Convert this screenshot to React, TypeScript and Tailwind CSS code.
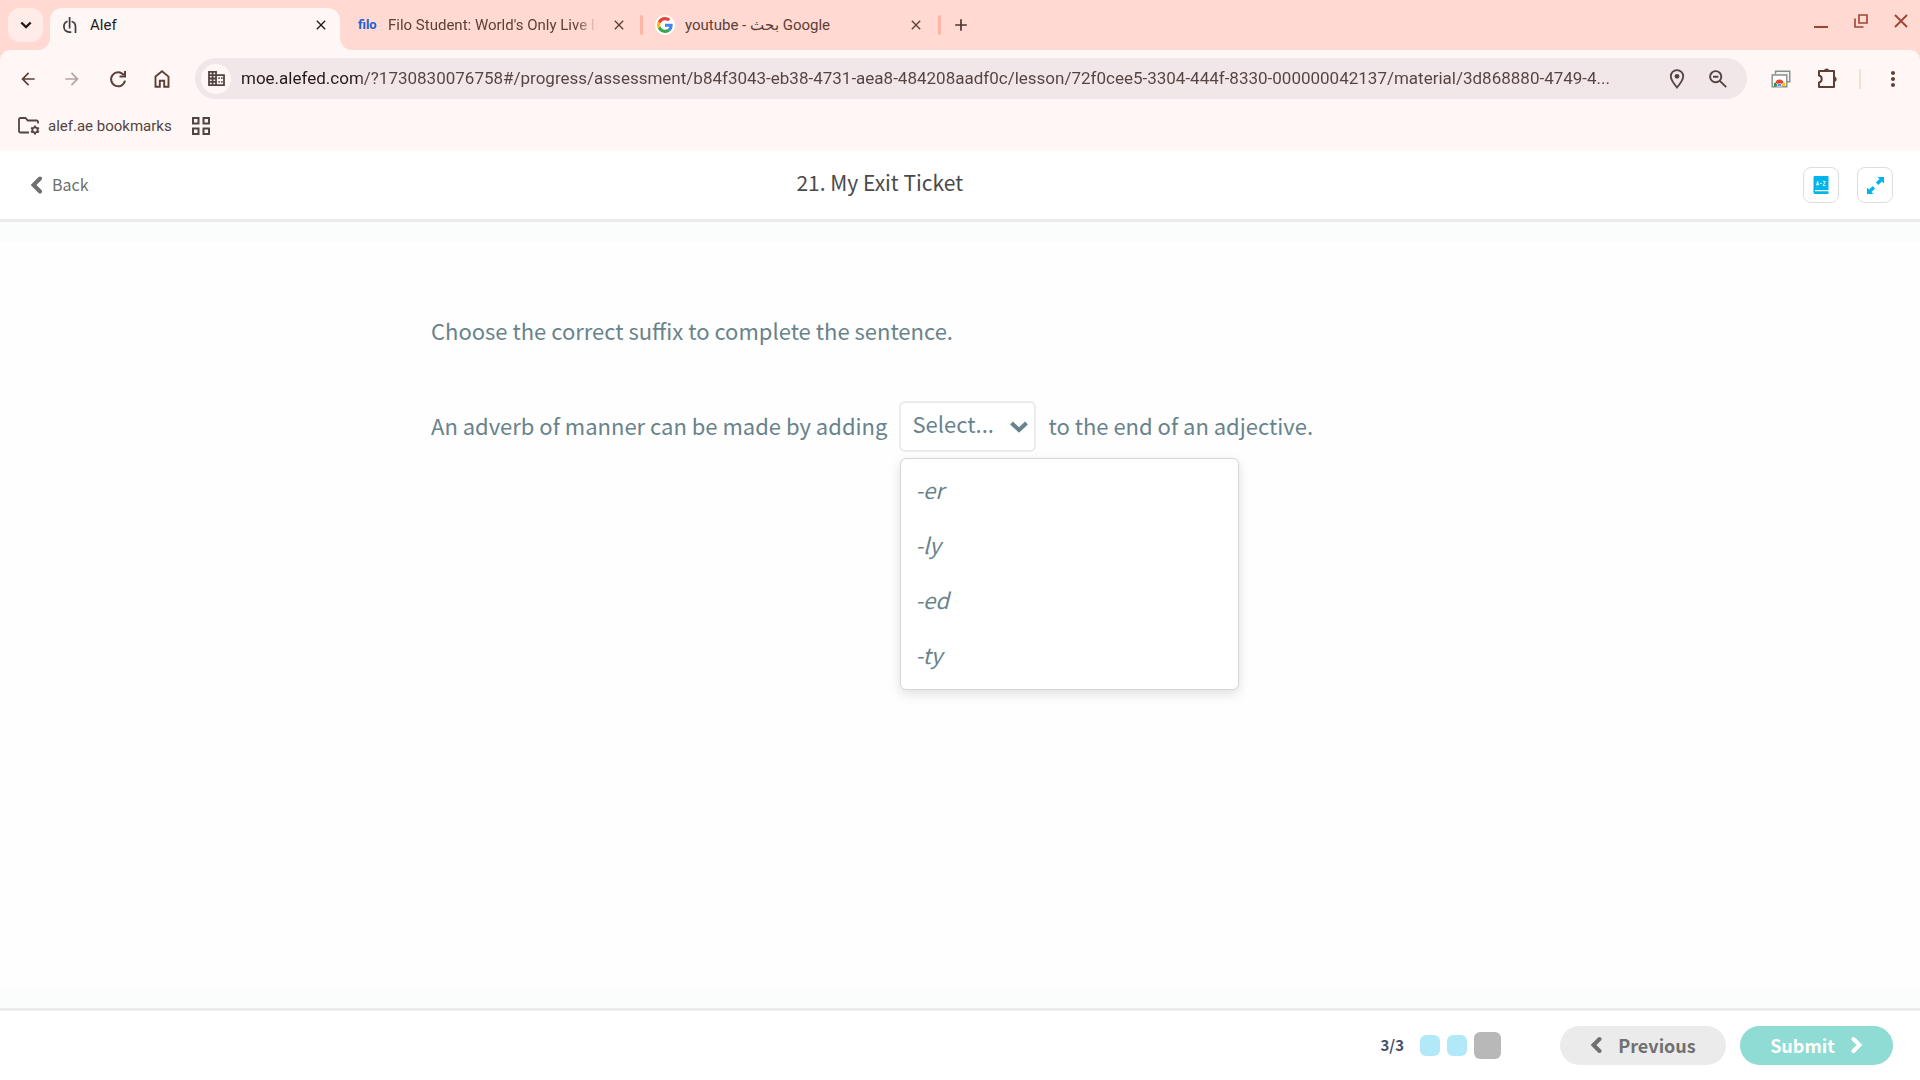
import React, { useState } from 'react';
import {
  MdArrowBack,
  MdArrowForward,
  MdClose,
  MdAdd,
  MdMoreVert,
} from 'react-icons/md';

const URL_TEXT =
  'moe.alefed.com/?1730830076758#/progress/assessment/b84f3043-eb38-4731-aea8-484208aadf0c/lesson/72f0cee5-3304-444f-8330-000000042137/material/3d868880-4749-4...';

const OPTIONS = ['-er', '-ly', '-ed', '-ty'];

const AlefIcon = () => (
  <svg className="h-[18px] w-[14px] text-[#3c3c40]" viewBox="0 0 14 18" fill="none" stroke="currentColor" strokeWidth="1.7">
    <path d="M4.6 5.200C2.200 6 .9 8 .9 10.600c0 3.200 2.200 5.500 5.600 5.500h1.800" />
    <path d="M6.600 1v11.500" />
    <path d="M8.600 5.500c2.600.7 3.900 2.400 3.900 5.100V17" />
  </svg>
);

const GoogleIcon = () => (
  <svg className="h-4 w-4" viewBox="0 0 48 48">
    <path fill="#EA4335" d="M24 9.500c3.540 0 6.710 1.220 9.210 3.600l6.850-6.850C35.900 2.380 30.470 0 24 0 14.620 0 6.510 5.380 2.560 13.220l7.980 6.190C12.430 13.720 17.740 9.500 24 9.500z" />
    <path fill="#4285F4" d="M46.980 24.550c0-1.570-.15-3.090-.38-4.550H24v9.020h12.940c-.58 2.960-2.260 5.480-4.780 7.180l7.730 6c4.510-4.180 7.090-10.360 7.090-17.650z" />
    <path fill="#FBBC05" d="M10.530 28.590c-.48-1.450-.76-2.990-.76-4.590s.27-3.140.76-4.590l-7.980-6.190C.92 16.460 0 20.120 0 24c0 3.880.92 7.540 2.560 10.780l7.970-6.190z" />
    <path fill="#34A853" d="M24 48c6.480 0 11.930-2.130 15.890-5.810l-7.730-6c-2.150 1.450-4.920 2.300-8.160 2.300-6.260 0-11.570-4.220-13.470-9.910l-7.980 6.190C6.510 42.620 14.620 48 24 48z" />
  </svg>
);

const Chevron = ({ className, d }: { className: string; d: string }) => (
  <svg className={className} viewBox="0 0 12 18" fill="none" stroke="currentColor" strokeWidth="4" strokeLinecap="round">
    <path d={d} />
  </svg>
);

const TabStrip = () => (
  <div className="flex h-[50px] justify-between">
    <div className="flex min-w-0 pl-2">
      <button aria-label="Search tabs" className="mt-2 flex h-[34px] w-[35px] items-center justify-center rounded-xl bg-[#ffece8]">
        <svg className="h-[10px] w-[12px] text-[#231918]" viewBox="0 0 12 10" fill="none" stroke="currentColor" strokeWidth="2.400">
          <path d="M1.300 2.500 6 7l4.700-4.500" />
        </svg>
      </button>

      <div className="relative ml-[7px] mt-2 flex w-[290px] items-center rounded-t-xl bg-[#fff7f5] pb-2 pl-[13px] pr-[11px] text-[#231918]">
        <svg className="absolute -left-3 bottom-0 h-3 w-3" viewBox="0 0 12 12" fill="#fff7f5">
          <path d="M12 0v12H0A12 12 0 0 0 12 0z" />
        </svg>
        <AlefIcon />
        <span className="ml-[13px] flex-1 text-[15px]">Alef</span>
        <button aria-label="Close Alef"><MdClose className="h-4 w-4" /></button>
        <svg className="absolute -right-3 bottom-0 h-3 w-3" viewBox="0 0 12 12" fill="#fff7f5">
          <path d="M0 0v12h12A12 12 0 0 1 0 0z" />
        </svg>
      </div>

      <div className="flex w-[300px] items-center pl-[18px] text-[#5d4038]">
        <span className="w-5 text-[13px] font-bold text-[#1f5fd6]">filo</span>
        <span className="ml-[10px] w-[218px] whitespace-nowrap text-[15px] [mask-image:linear-gradient(to_right,black_86%,transparent_96%)]">
          Filo Student: World's Only Live In
        </span>
        <button aria-label="Close Filo" className="ml-[5px]"><MdClose className="h-4 w-4" /></button>
      </div>
      <div className="h-5 w-[3px] self-center rounded-sm bg-[#ffb4a6]"></div>

      <div className="flex w-[295px] items-center pl-3 text-[#5d4038]">
        <span className="flex h-5 w-5 items-center justify-center rounded-full bg-white"><GoogleIcon /></span>
        <span className="ml-[10px] flex-1 text-[15px]">youtube - بحث Google</span>
        <button aria-label="Close Google" className="mr-[14px]"><MdClose className="h-4 w-4" /></button>
      </div>
      <div className="h-5 w-[3px] self-center rounded-sm bg-[#ffb4a6]"></div>
      <button aria-label="New tab" className="ml-[10px] text-[#4a3430]"><MdAdd className="h-5 w-5" /></button>
    </div>

    <div className="flex items-center gap-[26px] pb-2 pr-3 text-[#9c4536]">
      <button aria-label="Minimize">
        <svg className="h-[14px] w-[14px]" viewBox="0 0 14 14" stroke="currentColor" strokeWidth="2"><path d="M0 13h14" /></svg>
      </button>
      <button aria-label="Restore">
        <svg className="h-[14px] w-[14px]" viewBox="0 0 14 14" fill="none" stroke="currentColor" strokeWidth="1.600">
          <path d="M5 1h8v8H5zM1 4.500V13h8.500" />
        </svg>
      </button>
      <button aria-label="Close window">
        <svg className="h-[14px] w-[14px]" viewBox="0 0 14 14" stroke="currentColor" strokeWidth="1.800"><path d="m1 1 12 12M13 1 1 13" /></svg>
      </button>
    </div>
  </div>
);

const Toolbar = () => (
  <div className="flex items-center pl-[18px] pr-[15px] pt-2 text-[#5d4038]">
    <button aria-label="Back"><MdArrowBack className="h-5 w-5" /></button>
    <button aria-label="Forward" className="ml-6 text-[#b5a5a2]"><MdArrowForward className="h-5 w-5" /></button>
    <button aria-label="Reload" className="ml-[26px]">
      <svg className="h-5 w-5" viewBox="0 0 20 20" fill="none" stroke="currentColor" strokeWidth="2">
        <path d="M15.800 6.200A7 7 0 1 0 17 11.600" />
        <path d="M17 2v5.500h-5.500" />
      </svg>
    </button>
    <button aria-label="Home" className="ml-6">
      <svg className="h-5 w-5" viewBox="0 0 20 20" fill="none" stroke="currentColor" strokeWidth="1.900">
        <path d="M3.500 7.600 10 2.200l6.500 5.400v10.200h-4.300v-6H7.800v6H3.500z" />
      </svg>
    </button>

    <div className="ml-[23px] flex h-[41px] min-w-0 flex-1 items-center rounded-full bg-[#f1e6e8] pl-[6px] pr-5 text-[#534341]">
      <button aria-label="Site information" className="flex h-[30px] w-[30px] shrink-0 items-center justify-center rounded-full bg-[#fff7f5]">
        <svg className="h-[15px] w-[17px]" viewBox="0 0 18 16" fill="none" stroke="currentColor" strokeWidth="1.900">
          <path d="M1 1h7.500v14H1zM8.500 4.300H17V15H8.500M1 4.500h7.500M1 8h7.500M1 11.500h7.500M4.800 1v14" />
          <path d="M11 7.500h1.500M14 7.500h1.500M11 11.500h1.500M14 11.500h1.500" />
        </svg>
      </button>
      <input
        aria-label="Address"
        defaultValue={URL_TEXT}
        className="ml-[10px] min-w-0 flex-1 bg-[linear-gradient(90deg,#231918_120px,#534341_120px)] bg-clip-text text-[17px] text-transparent caret-black outline-none"
      />
      <button aria-label="Location" className="ml-4">
        <svg className="h-5 w-4" viewBox="0 0 16 20" fill="none" stroke="currentColor" strokeWidth="1.800">
          <path d="M8 18.500C4 13.800 1.800 10.600 1.800 7.300a6.200 6.200 0 0 1 12.400 0c0 3.300-2.200 6.500-6.200 11.200z" />
          <circle cx="8" cy="7.300" r="2.400" fill="currentColor" stroke="none" />
        </svg>
      </button>
      <button aria-label="Zoom" className="ml-6">
        <svg className="h-[18px] w-[18px]" viewBox="0 0 18 18" fill="none" stroke="currentColor" strokeWidth="1.900">
          <circle cx="6.700" cy="6.700" r="5.600" />
          <path d="m10.800 10.800 6.400 6.400M4 6.700h5.400" />
        </svg>
      </button>
    </div>

    <button aria-label="Tab groups" className="ml-6">
      <svg className="h-[18px] w-5" viewBox="0 0 20 18">
        <path d="M4.500 4V1.200h14.300v10.600H16" fill="#f7f3f2" stroke="#858e8c" strokeWidth="1.400" />
        <path d="M1.200 5h14.600v11.800H1.200z" fill="#fff" stroke="#858e8c" strokeWidth="1.400" />
        <path d="M4.300 12.500a4.400 4.400 0 0 1 8.400 0L8.500 15z" fill="#ea4335" />
        <path d="M3 13.200c1.500-1.200 3 .3 3.500 3.100H3z" fill="#1e9e4f" />
        <path d="M14 12.500c-2-.4-3.200 1-3.500 3.800H14z" fill="#fbc116" />
        <path d="M6 16.300a2.500 2.800 0 0 1 5 0z" fill="#4285f4" stroke="#fff" strokeWidth=".6" />
      </svg>
    </button>
    <button aria-label="Extensions" className="ml-[26px]">
      <svg className="h-[21px] w-[21px]" viewBox="0 0 21 21" fill="none" stroke="currentColor" strokeWidth="2" strokeLinejoin="round">
        <path d="M2 3h15v16H2v-4.500c3.600-.8 3.600-6.200 0-7z" />
        <path d="M7 3a2.600 2.600 0 0 1 5.200 0zM17 8.600a2.600 2.600 0 0 1 0 5.200z" fill="currentColor" stroke="none" />
      </svg>
    </button>
    <div className="ml-[21px] h-5 w-[2px] bg-[#ffdad3]"></div>
    <button aria-label="Menu" className="ml-5"><MdMoreVert className="h-6 w-6" /></button>
  </div>
);

const Bookmarks = () => (
  <div className="flex h-[52px] items-center pb-4 pl-[18px] pt-[18px] text-[15px] text-[#534341]">
    <a href="#bookmarks" className="flex items-center">
      <svg className="h-[18px] w-[22px]" viewBox="0 0 22 18" fill="none" stroke="currentColor" strokeWidth="1.800">
        <path d="M11 15.500H2.500A1.500 1.500 0 0 1 1 14V2.500A1.500 1.500 0 0 1 2.500 1h5l2.300 2.500h8.700A1.300 1.300 0 0 1 20 5v1.500" />
        <circle cx="17" cy="13" r="2.700" />
        <path d="M17 8.500v2M17 15.500v2M13 10.700l1.800 1M19.200 14.300l1.800 1M13 15.300l1.800-1M19.200 11.700l1.800-1" />
      </svg>
      <span className="ml-2">alef.ae bookmarks</span>
    </a>
    <button aria-label="All apps" className="ml-5">
      <svg className="h-[18px] w-[18px]" viewBox="0 0 18 18" fill="none" stroke="currentColor" strokeWidth="2">
        <path d="M1 1h5.500v5.500H1zM11.500 1H17v5.500h-5.500zM1 11.500h5.500V17H1zM11.500 11.500H17V17h-5.500z" />
      </svg>
    </button>
  </div>
);

const LessonHeader = () => (
  <header className="flex h-[71px] items-center border-b-[3px] border-[#ebebeb] bg-white pl-[30px] pr-[27px]">
    <a href="#back" className="flex items-center text-[16px] text-[#6f6f6f]">
      <Chevron className="h-[18px] w-[13px]" d="M9.500 2.500 3 9l6.500 6.500" />
      <span className="ml-[9px] pb-[2px]">Back</span>
    </a>
    <h1 className="flex-1 pb-1 pr-[132px] text-center text-[21px] text-[#4a4a4a]">21. My Exit Ticket</h1>
    <div className="flex gap-[18px] text-[#00b5e9]">
      <button aria-label="Dictionary" className="flex h-9 w-9 items-center justify-center rounded-lg border border-[#dedede]">
        <svg className="h-[18px] w-4" viewBox="0 0 16 18">
          <path d="M1.500 0h14v14H2v1.200h13.500V18H2a1.500 1.500 0 0 1-1.500-1.500v-15A1.500 1.500 0 0 1 1.500 0z" fill="currentColor" />
          <path d="M3.500 9.500 4.600 5.500l1.100 4M3.900 8.300h1.500M7 7.500h1.800M10 5.500h2.400L10 9.500h2.400" fill="none" stroke="#fff" strokeWidth=".9" />
        </svg>
      </button>
      <button aria-label="Full screen" className="flex h-9 w-9 items-center justify-center rounded-lg border border-[#dedede]">
        <svg className="h-[17px] w-[17px]" viewBox="0 0 17 17" fill="currentColor">
          <path d="M10.500 0H17v6.500l-2.100-2.100-3.600 3.600-2.400-2.400 3.600-3.600zM6.500 17H0v-6.500l2.100 2.100 3.600-3.600 2.400 2.400-3.600 3.600z" />
        </svg>
      </button>
    </div>
  </header>
);

const SuffixSelect = () => {
  const [open, setOpen] = useState(true);
  const [value, setValue] = useState('');

  return (
    <div className="relative mx-3 text-[#68838b]">
      <select
        aria-label="Suffix"
        value={value}
        onMouseDown={(e) => {
          e.preventDefault();
          setOpen(!open);
        }}
        onChange={(e) => setValue(e.target.value)}
        className="block h-[51px] w-[137px] appearance-none rounded-md border-2 border-[#ebebeb] bg-white pb-[6px] pl-[11px] outline-none"
      >
        <option value="">Select...</option>
        {OPTIONS.map((option) => (
          <option key={option} value={option}>{option}</option>
        ))}
      </select>
      <svg className="pointer-events-none absolute right-2 top-5 h-3 w-[18px]" viewBox="0 0 18 12" fill="none" stroke="currentColor" strokeWidth="4">
        <path d="m1.500 2 7.500 7 7.500-7" />
      </svg>

      {open && (
        <ul className="absolute left-px top-[57px] z-10 w-[339px] rounded-md border border-[#d6d6d6] bg-white pb-[7px] pt-[3px] shadow-[0_4px_12px_rgba(0,0,0,0.12)]">
          {OPTIONS.map((option) => (
            <li key={option}>
              <button
                className="flex h-[55px] w-full items-center px-[14px] text-left italic"
                onClick={() => {
                  setValue(option);
                  setOpen(false);
                }}
              >
                {option}
              </button>
            </li>
          ))}
        </ul>
      )}
    </div>
  );
};

const LessonFooter = () => (
  <footer className="flex h-[72px] items-center justify-end border-t-[3px] border-[#ebebeb] bg-white pr-[27px] font-bold">
    <span className="text-[15px] text-[#434f64]">3/3</span>
    <div className="ml-4 flex items-center gap-[7px]">
      <span className="h-[21px] w-5 rounded-md bg-[#b1e9f8]"></span>
      <span className="h-[21px] w-5 rounded-md bg-[#b1e9f8]"></span>
      <span className="h-[27px] w-[27px] rounded-md bg-[#b8b8b8]"></span>
    </div>
    <button className="ml-[59px] flex h-[39px] w-[166px] items-center justify-center gap-4 rounded-full bg-[#ebebeb] pb-px text-[18px] text-[#707070]">
      <Chevron className="h-[18px] w-3" d="M9.500 3 3.500 9l6 6" />
      Previous
    </button>
    <button className="ml-[14px] flex h-[39px] w-[153px] items-center justify-center gap-4 rounded-full bg-[#8edcd3] pb-px text-[18px] text-white">
      Submit
      <Chevron className="h-[18px] w-3" d="m2.500 3 6 6-6 6" />
    </button>
  </footer>
);

export default function App() {
  return (
    <div className="flex min-h-screen flex-col bg-[#ffd9d2] font-['Roboto',sans-serif]">
      <TabStrip />
      <div className="rounded-t-[10px] bg-[#fff7f5]">
        <Toolbar />
        <Bookmarks />
      </div>

      <div className="flex flex-1 flex-col bg-white font-['Noto_Sans_CJK_SC',sans-serif]">
        <LessonHeader />
        <main className="flex-1 border-y-[20px] border-[#fbfdfd] bg-[#fefefe] px-8">
          <div className="mx-auto max-w-[1058px] pt-[72px] text-[22px] text-[#68838b]">
            <p className="leading-8">Choose the correct suffix to complete the sentence.</p>
            <div className="mt-[55px] flex items-center whitespace-nowrap">
              <span className="pb-[2px]">An adverb of manner can be made by adding</span>
              <SuffixSelect />
              <span className="pb-[2px]">to the end of an adjective.</span>
            </div>
          </div>
        </main>
        <LessonFooter />
      </div>
    </div>
  );
}
